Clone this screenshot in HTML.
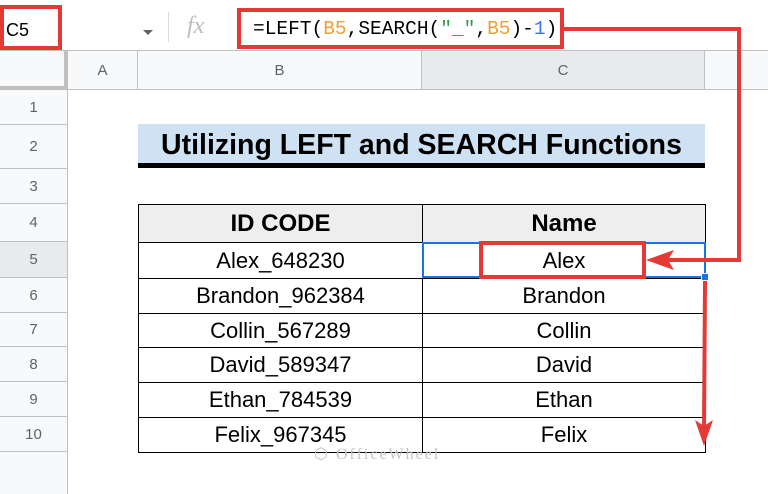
<!DOCTYPE html>
<html><head><style>
*{margin:0;padding:0;box-sizing:border-box}
body{width:768px;height:494px;overflow:hidden;background:#fff;font-family:"Liberation Sans",Arial,sans-serif;position:relative}
.a{position:absolute}
.rh{position:absolute;left:0;width:68px;border-bottom:1px solid #c0c0c0;background:#f8f9fa;color:#5f6368;font-size:15px;display:flex;align-items:center;justify-content:center;border-right:1px solid #c0c0c0}
.ch{position:absolute;top:51px;height:39px;border-right:1px solid #c0c0c0;color:#5f6368;font-size:15px;display:flex;align-items:center;justify-content:center;background:#f8f9fa;border-bottom:1px solid #c0c0c0}
.c{position:absolute;display:flex;align-items:center;justify-content:center;font-size:22px;color:#000;border:1px solid #000}
</style></head><body>
<div class="a" style="left:0;top:0;width:768px;height:51px;background:#fff;border-bottom:1px solid #c0c0c0"></div>
<div class="a" style="left:0;top:5px;width:62px;height:45px;border:4px solid #e53935"></div>
<div class="a" style="left:6px;top:20px;font-size:18px;color:#000">C5</div>
<div class="a" style="left:143px;top:30px;width:0;height:0;border-left:5px solid transparent;border-right:5px solid transparent;border-top:5px solid #5f6368"></div>
<div class="a" style="left:168px;top:12px;width:1px;height:30px;background:#dadce0"></div>
<div class="a" style="left:187px;top:13px;font-family:'Liberation Serif',serif;font-style:italic;font-size:24px;color:#bdbdbd">fx</div>
<div class="a" style="left:237px;top:8px;width:327px;height:41px;border:4px solid #e53935"></div>
<div class="a" style="left:253px;top:18px;font-family:'Liberation Mono',monospace;font-size:19.5px;color:#000;white-space:nowrap">=LEFT(<span style="color:#f0a030">B5</span>,SEARCH(<span style="color:#2e9d4a">"_"</span>,<span style="color:#f0a030">B5</span>)-<span style="color:#3b78e7">1</span>)</div>
<div class="a" style="left:0;top:51px;width:68px;height:39px;background:#f8f9fa;border-right:4px solid #c0c0c0;border-bottom:4px solid #c0c0c0"></div>
<div class="ch" style="left:68px;width:70px">A</div>
<div class="ch" style="left:138px;width:284px">B</div>
<div class="ch" style="left:422px;width:283px;background:#e8eaed">C</div>
<div class="ch" style="left:705px;width:63px;border-right:none"></div>
<div class="rh" style="top:90px;height:35px">1</div>
<div class="rh" style="top:125px;height:44px">2</div>
<div class="rh" style="top:169px;height:35px">3</div>
<div class="rh" style="top:204px;height:38px">4</div>
<div class="rh" style="top:242px;height:36px;background:#e8eaed">5</div>
<div class="rh" style="top:278px;height:35px">6</div>
<div class="rh" style="top:313px;height:34px">7</div>
<div class="rh" style="top:347px;height:35px">8</div>
<div class="rh" style="top:382px;height:35px">9</div>
<div class="rh" style="top:417px;height:35px">10</div>
<div class="rh" style="top:452px;height:42px;border-bottom:none"></div>
<div class="a" style="left:138px;top:124px;width:567px;height:44px;background:#cfe2f3;border-bottom:5px solid #000;display:flex;align-items:center;justify-content:center;font-weight:bold;font-size:28.5px;padding-top:3px;white-space:nowrap">Utilizing LEFT and SEARCH Functions</div>
<div class="c" style="left:138px;top:204px;width:285px;height:39px;background:#eeeeee;font-weight:bold;font-size:24px">ID CODE</div>
<div class="c" style="left:422px;top:204px;width:284px;height:39px;background:#eeeeee;font-weight:bold;font-size:24px">Name</div>
<div class="c" style="left:138px;top:242px;width:285px;height:37px">Alex_648230</div>
<div class="c" style="left:422px;top:242px;width:284px;height:37px">Alex</div>
<div class="c" style="left:138px;top:278px;width:285px;height:36px">Brandon_962384</div>
<div class="c" style="left:422px;top:278px;width:284px;height:36px">Brandon</div>
<div class="c" style="left:138px;top:313px;width:285px;height:35px">Collin_567289</div>
<div class="c" style="left:422px;top:313px;width:284px;height:35px">Collin</div>
<div class="c" style="left:138px;top:347px;width:285px;height:36px">David_589347</div>
<div class="c" style="left:422px;top:347px;width:284px;height:36px">David</div>
<div class="c" style="left:138px;top:382px;width:285px;height:36px">Ethan_784539</div>
<div class="c" style="left:422px;top:382px;width:284px;height:36px">Ethan</div>
<div class="c" style="left:138px;top:417px;width:285px;height:36px">Felix_967345</div>
<div class="c" style="left:422px;top:417px;width:284px;height:36px">Felix</div>
<div class="a" style="left:422px;top:242px;width:284px;height:36px;border:2px solid #1a73e8"></div>
<div class="a" style="left:701px;top:273px;width:8px;height:8px;background:#1a73e8;border:1px solid #fff"></div>
<div class="a" style="left:479px;top:241px;width:167px;height:38px;border:4px solid #e53935"></div>
<div class="a" style="left:314px;top:444px;font-family:'Liberation Serif',serif;font-size:16px;color:#c4c4c4;letter-spacing:2px;white-space:nowrap">⬡ OfficeWheel</div>
<svg class="a" style="left:0;top:0" width="768" height="494">
<polyline points="564,29 739,29 739,260 660,260" fill="none" stroke="#e53935" stroke-width="4"/>
<polygon points="646,260 674,250 668,260 674,270" fill="#e53935"/>
<line x1="705" y1="281" x2="704" y2="430" stroke="#e53935" stroke-width="4"/>
<polygon points="704,446 695,420 704,426 713,420" fill="#e53935"/>
</svg>
</body></html>
